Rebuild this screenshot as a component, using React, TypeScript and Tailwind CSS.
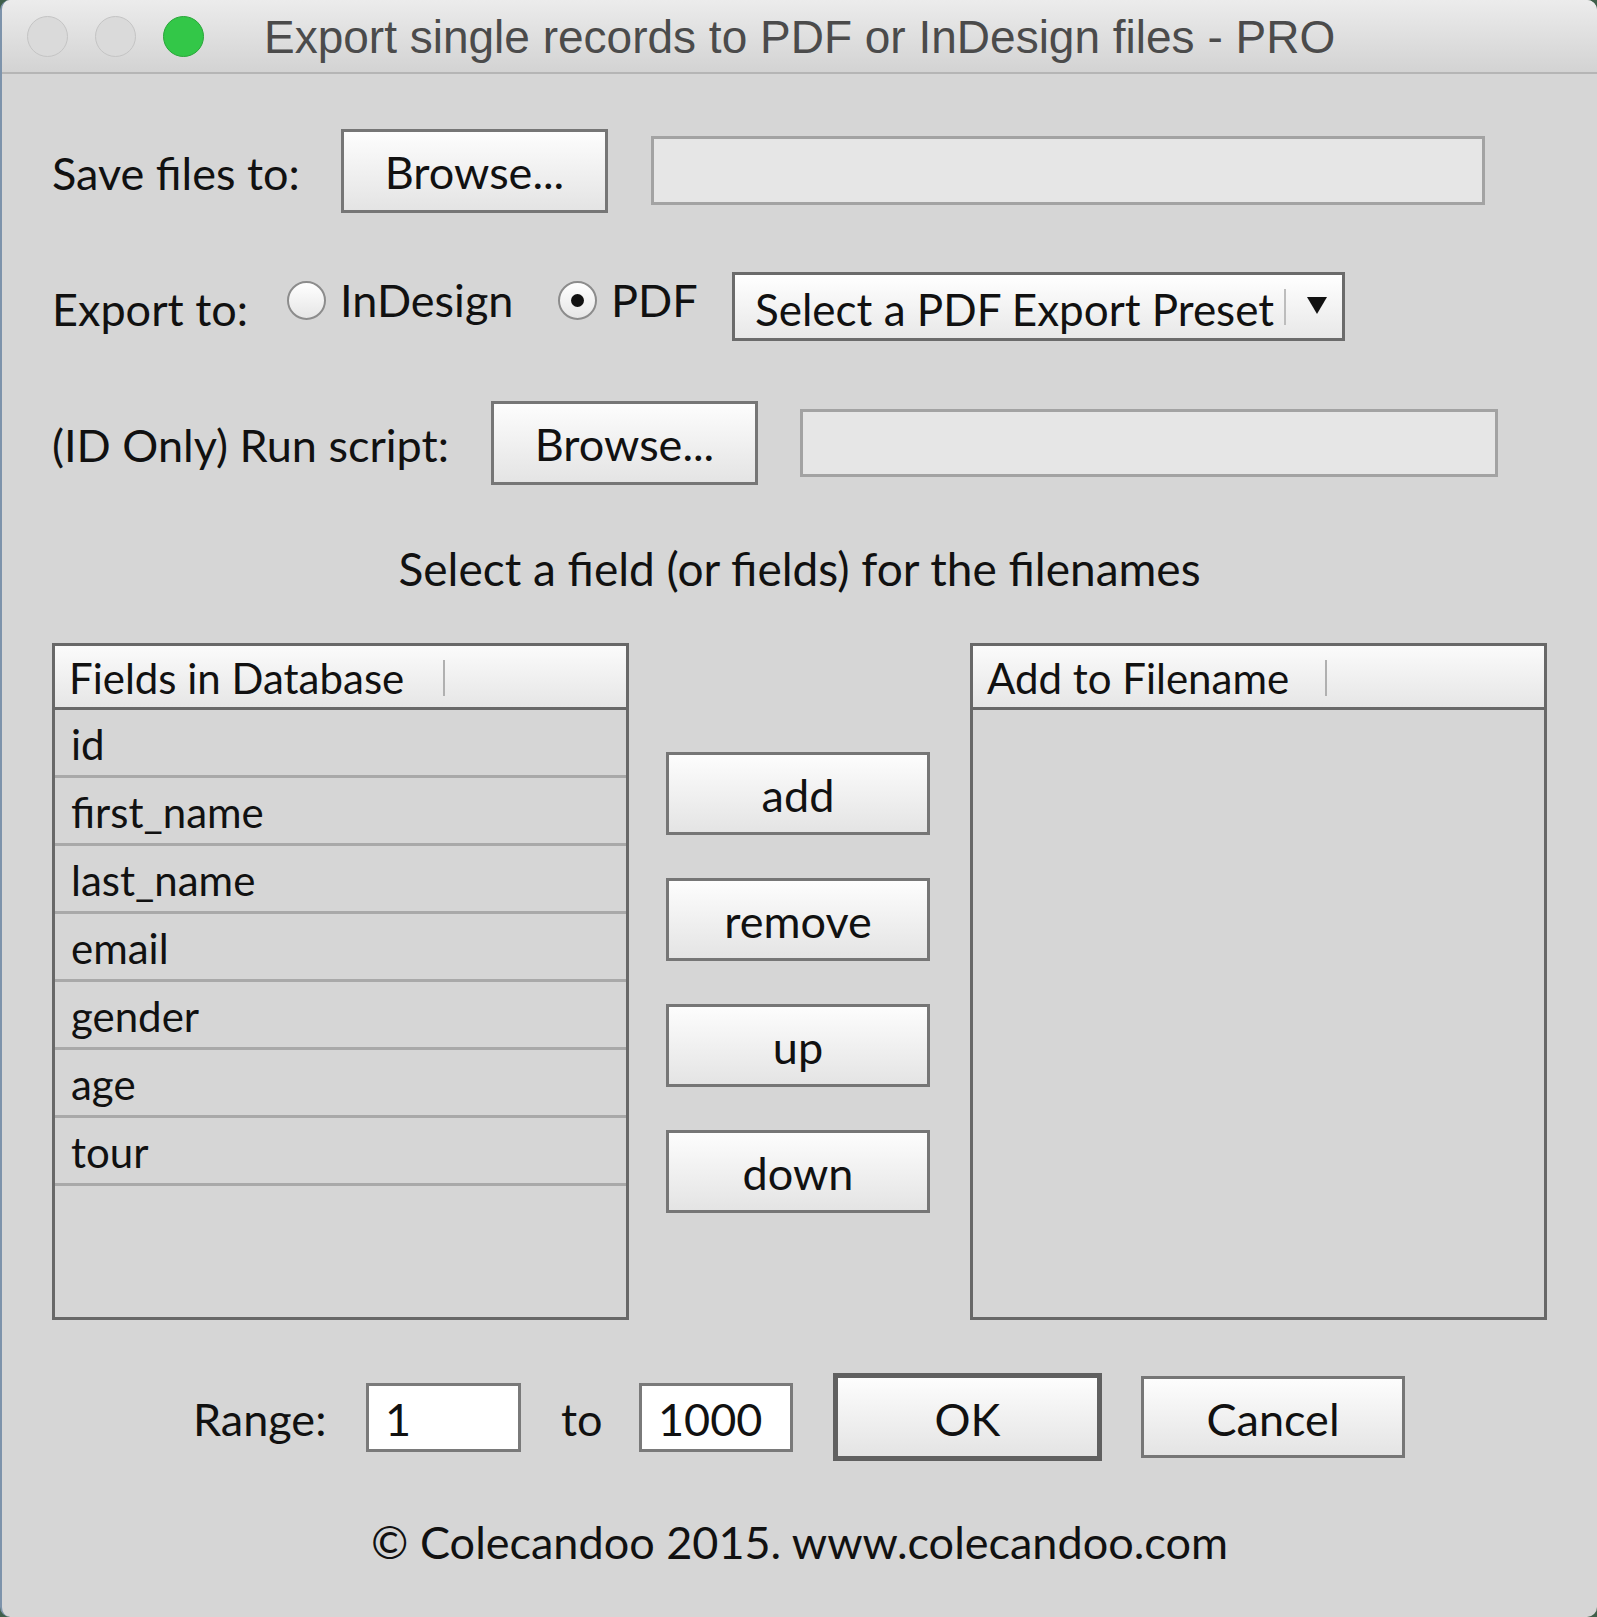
import React from "react";

const F = { fontFamily: "Lato, 'Open Sans', sans-serif" };

function Btn({ children, className = "" }: { children: React.ReactNode; className?: string }) {
  return (
    <div
      className={`flex items-center justify-center border-[3px] border-[#767676] bg-gradient-to-b from-[#fdfdfd] to-[#e4e4e4] pt-[5px] text-[45px] text-[#111] ${className}`}
    >
      {children}
    </div>
  );
}

function Radio({ checked }: { checked?: boolean }) {
  return (
    <div className="flex h-[39px] w-[39px] shrink-0 items-center justify-center rounded-full border-2 border-[#8c8c8c] bg-gradient-to-b from-[#ffffff] to-[#e6e6e6]">
      {checked && <div className="h-[13px] w-[13px] rounded-full bg-[#111]" />}
    </div>
  );
}

function ListBox({ title, sepLeft, items, width }: { title: string; sepLeft: string; items: string[]; width: string }) {
  return (
    <div className={`flex h-[677px] flex-col border-[3px] border-[#686868] ${width}`}>
      <div className="relative flex h-[64px] shrink-0 items-center border-b-[3px] border-[#686868] bg-gradient-to-b from-[#fbfbfb] to-[#e6e6e6] pl-[14px] pt-[4px] text-[42px] text-[#111]">
        {title}
        <div className={`absolute top-[14px] h-[36px] w-[2px] bg-[#b0b0b0] ${sepLeft}`} />
      </div>
      {items.map((it) => (
        <div key={it} className="flex h-[68px] shrink-0 items-center border-b-[3px] border-[#a9a9a9] pl-[16px] pt-[4px] text-[42px] text-[#111]">
          {it}
        </div>
      ))}
    </div>
  );
}

export default function App() {
  return (
    <div className="h-[1617px] w-[1597px] overflow-hidden bg-[#3f5f4a]" style={F}>
      <div className="flex h-[1617px] w-[1597px] flex-col overflow-hidden rounded-[10px] border-l-2 border-[#7d93ab] bg-[#d6d6d6]">
        {/* Title bar */}
        <div className="flex h-[74px] shrink-0 items-center border-b-2 border-[#b5b5b5] bg-gradient-to-b from-[#ececec] to-[#d3d3d3]">
          <div className="ml-[25px] flex gap-[27px]">
            <div className="h-[41px] w-[41px] rounded-full border border-[#c4c4c4] bg-[#dadada]" />
            <div className="h-[41px] w-[41px] rounded-full border border-[#c4c4c4] bg-[#dadada]" />
            <div className="h-[41px] w-[41px] rounded-full border border-[#2aa63a] bg-[#33c748]" />
          </div>
          <div
            className="ml-[60px] pt-[3px] text-[46px] text-[#4b4b4b]"
            style={{ fontFamily: "'Liberation Sans', Arial, sans-serif" }}
          >
            Export single records to PDF or InDesign files - PRO
          </div>
        </div>

        <div className="flex flex-col pl-[50px]">
          {/* Row 1 */}
          <div className="mt-[55px] flex h-[83px] items-center">
            <div className="w-[289px] pt-[6px] text-[45px] text-[#111]">Save files to:</div>
            <Btn className="h-[84px] w-[267px]">Browse...</Btn>
            <div className="ml-[43px] h-[69px] w-[834px] border-[3px] border-[#a3a3a3] bg-[#e6e6e6]" />
          </div>

          {/* Row 2 */}
          <div className="mt-[60px] flex h-[69px] items-center">
            <div className="mt-[6px] w-[235px] text-[45px] text-[#111]">Export to:</div>
            <div className="-mt-[12px] flex w-[271px] items-center">
              <Radio />
              <span className="ml-[14px] text-[45px] text-[#111]">InDesign</span>
            </div>
            <div className="-mt-[12px] flex w-[174px] items-center">
              <Radio checked />
              <span className="ml-[14px] text-[45px] text-[#111]">PDF</span>
            </div>
            <div className="relative flex h-[69px] w-[613px] items-center border-[3px] border-[#6b6b6b] bg-gradient-to-b from-[#ffffff] to-[#e8e8e8] pl-[20px] pt-[4px] text-[44px] text-[#111]">
              Select a PDF Export Preset
              <div className="absolute left-[549px] top-[14px] h-[36px] w-[2px] bg-[#bdbdbd]" />
              <div className="absolute left-[572px] top-[22px] h-0 w-0 border-l-[10px] border-r-[10px] border-t-[17px] border-l-transparent border-r-transparent border-t-[#111]" />
            </div>
          </div>

          {/* Row 3 */}
          <div className="mt-[60px] flex h-[83px] items-center">
            <div className="w-[439px] pt-[6px] text-[45px] text-[#111]">(ID Only) Run script:</div>
            <Btn className="h-[84px] w-[267px]">Browse...</Btn>
            <div className="ml-[42px] h-[68px] w-[698px] border-[3px] border-[#a3a3a3] bg-[#e6e6e6]" />
          </div>

          {/* Heading */}
          <div className="mt-[56px] flex h-[56px] items-center justify-center pr-[50px] text-[46px] text-[#111]">
            Select a field (or fields) for the filenames
          </div>

          {/* Lists */}
          <div className="mt-[47px] flex">
            <ListBox
              title="Fields in Database"
              sepLeft="left-[388px]"
              width="w-[577px]"
              items={["id", "first_name", "last_name", "email", "gender", "age", "tour"]}
            />
            <div className="ml-[37px] flex flex-col gap-[43px] pt-[109px]">
              <Btn className="h-[83px] w-[264px]">add</Btn>
              <Btn className="h-[83px] w-[264px]">remove</Btn>
              <Btn className="h-[83px] w-[264px]">up</Btn>
              <Btn className="h-[83px] w-[264px]">down</Btn>
            </div>
            <ListBox title="Add to Filename" sepLeft="left-[352px]" width="ml-[40px] w-[577px]" items={[]} />
          </div>

          {/* Bottom row */}
          <div className="mt-[53px] flex h-[88px] items-center">
            <div className="ml-[141px] w-[173px] pt-[6px] text-[45px] text-[#111]">Range:</div>
            <div className="flex h-[69px] w-[155px] items-center border-[3px] border-[#7a7a7a] bg-white pl-[16px] pt-[5px] text-[45px] text-[#111]">
              1
            </div>
            <div className="ml-[40px] w-[78px] pt-[6px] text-[45px] text-[#111]">to</div>
            <div className="flex h-[69px] w-[154px] items-center border-[3px] border-[#7a7a7a] bg-white pl-[16px] pt-[5px] text-[45px] text-[#111]">
              1000
            </div>
            <div className="ml-[40px] flex h-[88px] w-[269px] items-center justify-center border-[5px] border-[#606060] bg-gradient-to-b from-[#fdfdfd] to-[#e4e4e4] pt-[5px] text-[45px] text-[#111]">
              OK
            </div>
            <Btn className="ml-[39px] h-[82px] w-[264px]">Cancel</Btn>
          </div>

          {/* Footer */}
          <div className="mt-[54px] flex h-[56px] items-center justify-center pr-[50px] text-[45px] text-[#111]">
            © Colecandoo 2015. www.colecandoo.com
          </div>
        </div>
      </div>
    </div>
  );
}
